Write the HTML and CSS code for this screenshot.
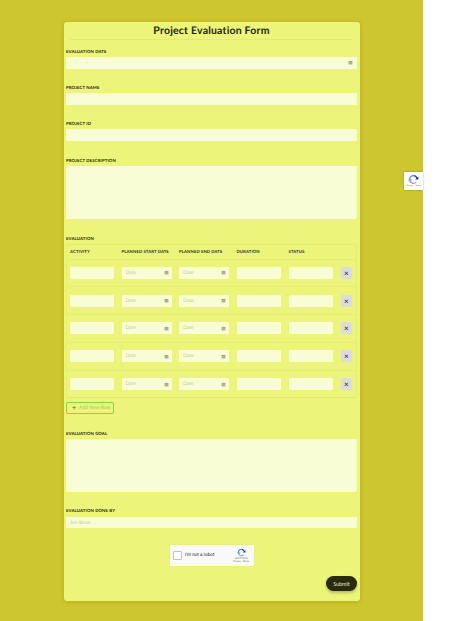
FILE: index.html
```html
<!DOCTYPE html>
<html lang="en">
<head>
<meta charset="utf-8">
<title>Project Evaluation Form</title>
<link rel="stylesheet" href="styles.css">
</head>
<body>
<main class="page">
  <form class="card">
    <h1 class="title">Project Evaluation Form</h1>
    <div class="field f-date">
      <label class="label">EVALUATION DATE</label>
      <div class="input"><span class="ph faint">- - / - - / - - - -</span><svg class="cal" viewBox="0 0 8 8"><path d="M1 1.5h6v5.5H1z" fill="#9b9b80"/><path d="M1.6 3.2h4.8M1.6 4.6h4.8M1.6 5.8h4.8" stroke="#dcdcc0" stroke-width=".5"/></svg></div>
    </div>
    <div class="field f-name">
      <label class="label">PROJECT NAME</label>
      <div class="input"></div>
    </div>
    <div class="field f-id">
      <label class="label">PROJECT ID</label>
      <div class="input"></div>
    </div>
    <div class="field f-desc">
      <label class="label">PROJECT DESCRIPTION</label>
      <div class="textarea"></div>
    </div>
    <div class="field f-eval">
      <label class="label">EVALUATION</label>
      <div class="table">
        <div class="row head">
          <span>ACTIVITY</span><span>PLANNED START DATE</span><span>PLANNED END DATE</span><span>DURATION</span><span>STATUS</span><span></span>
        </div>
        <div class="row">
          <div class="cell"></div>
          <div class="cell date"><span class="ph">Date</span><svg class="cal" viewBox="0 0 8 8"><path d="M1 1.5h6v5.5H1z" fill="#9b9b80"/><path d="M1.6 3.2h4.8M1.6 4.6h4.8M1.6 5.8h4.8" stroke="#dcdcc0" stroke-width=".5"/></svg></div>
          <div class="cell date"><span class="ph">Date</span><svg class="cal" viewBox="0 0 8 8"><path d="M1 1.5h6v5.5H1z" fill="#9b9b80"/><path d="M1.6 3.2h4.8M1.6 4.6h4.8M1.6 5.8h4.8" stroke="#dcdcc0" stroke-width=".5"/></svg></div>
          <div class="cell"></div><div class="cell"></div>
          <div class="del"><span class="del-x">×</span></div>
        </div>
        <div class="row">
          <div class="cell"></div>
          <div class="cell date"><span class="ph">Date</span><svg class="cal" viewBox="0 0 8 8"><path d="M1 1.5h6v5.5H1z" fill="#9b9b80"/><path d="M1.6 3.2h4.8M1.6 4.6h4.8M1.6 5.8h4.8" stroke="#dcdcc0" stroke-width=".5"/></svg></div>
          <div class="cell date"><span class="ph">Date</span><svg class="cal" viewBox="0 0 8 8"><path d="M1 1.5h6v5.5H1z" fill="#9b9b80"/><path d="M1.6 3.2h4.8M1.6 4.6h4.8M1.6 5.8h4.8" stroke="#dcdcc0" stroke-width=".5"/></svg></div>
          <div class="cell"></div><div class="cell"></div>
          <div class="del"><span class="del-x">×</span></div>
        </div>
        <div class="row">
          <div class="cell"></div>
          <div class="cell date"><span class="ph">Date</span><svg class="cal" viewBox="0 0 8 8"><path d="M1 1.5h6v5.5H1z" fill="#9b9b80"/><path d="M1.6 3.2h4.8M1.6 4.6h4.8M1.6 5.8h4.8" stroke="#dcdcc0" stroke-width=".5"/></svg></div>
          <div class="cell date"><span class="ph">Date</span><svg class="cal" viewBox="0 0 8 8"><path d="M1 1.5h6v5.5H1z" fill="#9b9b80"/><path d="M1.6 3.2h4.8M1.6 4.6h4.8M1.6 5.8h4.8" stroke="#dcdcc0" stroke-width=".5"/></svg></div>
          <div class="cell"></div><div class="cell"></div>
          <div class="del"><span class="del-x">×</span></div>
        </div>
        <div class="row">
          <div class="cell"></div>
          <div class="cell date"><span class="ph">Date</span><svg class="cal" viewBox="0 0 8 8"><path d="M1 1.5h6v5.5H1z" fill="#9b9b80"/><path d="M1.6 3.2h4.8M1.6 4.6h4.8M1.6 5.8h4.8" stroke="#dcdcc0" stroke-width=".5"/></svg></div>
          <div class="cell date"><span class="ph">Date</span><svg class="cal" viewBox="0 0 8 8"><path d="M1 1.5h6v5.5H1z" fill="#9b9b80"/><path d="M1.6 3.2h4.8M1.6 4.6h4.8M1.6 5.8h4.8" stroke="#dcdcc0" stroke-width=".5"/></svg></div>
          <div class="cell"></div><div class="cell"></div>
          <div class="del"><span class="del-x">×</span></div>
        </div>
        <div class="row">
          <div class="cell"></div>
          <div class="cell date"><span class="ph">Date</span><svg class="cal" viewBox="0 0 8 8"><path d="M1 1.5h6v5.5H1z" fill="#9b9b80"/><path d="M1.6 3.2h4.8M1.6 4.6h4.8M1.6 5.8h4.8" stroke="#dcdcc0" stroke-width=".5"/></svg></div>
          <div class="cell date"><span class="ph">Date</span><svg class="cal" viewBox="0 0 8 8"><path d="M1 1.5h6v5.5H1z" fill="#9b9b80"/><path d="M1.6 3.2h4.8M1.6 4.6h4.8M1.6 5.8h4.8" stroke="#dcdcc0" stroke-width=".5"/></svg></div>
          <div class="cell"></div><div class="cell"></div>
          <div class="del"><span class="del-x">×</span></div>
        </div>
      </div>
      <div class="add"><span class="plus">+</span> Add New Row</div>
    </div>
    <div class="field f-goal">
      <label class="label">EVALUATION GOAL</label>
      <div class="textarea"></div>
    </div>
    <div class="field f-done">
      <label class="label">EVALUATION DONE BY</label>
      <div class="input"><span class="ph">Jon Brow</span></div>
    </div>
    <div class="captcha">
      <span class="check"></span>
      <span class="robot">I'm not a robot</span>
      <span class="brand">
        <svg class="rc" viewBox="0 0 16 16"><path d="M8 1.5a6.5 6.5 0 0 1 5.6 3.2L15 3.5V8h-4.5l1.7-1.7A4.6 4.6 0 0 0 8 3.4z" fill="#1c3aa9"/><path d="M8 1.5A6.5 6.5 0 0 0 1.5 8H0l3 3.5L6 8H3.4A4.6 4.6 0 0 1 8 3.4z" fill="#4a90e2"/><path d="M1.5 8A6.5 6.5 0 0 0 12.7 12.5l-1.4-1.4A4.6 4.6 0 0 1 3.4 8z" fill="#ababab"/></svg>
        <span class="rc-t">reCAPTCHA</span>
        <span class="rc-t">Privacy - Terms</span>
      </span>
    </div>
    <div class="actions"><button type="button" class="submit">Submit</button></div>
  </form>
  <aside class="badge">
    <svg class="rc-b" viewBox="0 0 16 16"><path d="M8 1.5a6.5 6.5 0 0 1 5.6 3.2L15 3.5V8h-4.5l1.7-1.7A4.6 4.6 0 0 0 8 3.4z" fill="#1c3aa9"/><path d="M8 1.5A6.5 6.5 0 0 0 1.5 8H0l3 3.5L6 8H3.4A4.6 4.6 0 0 1 8 3.4z" fill="#4a90e2"/><path d="M1.5 8A6.5 6.5 0 0 0 12.7 12.5l-1.4-1.4A4.6 4.6 0 0 1 3.4 8z" fill="#ababab"/></svg>
    <span class="badge-t">Privacy - Terms</span>
  </aside>
</main>
</body>
</html>
```
FILE: styles.css
```css
* { box-sizing: border-box; }
html, body { margin: 0; background: #fff; }
body { font-family: "Lato", "Liberation Sans", sans-serif; color: #2a2a10; height: 621px; overflow: hidden; text-rendering: geometricPrecision; }
.page { position: relative; width: 423px; height: 621px; background: #cec62e; padding: 22px 63px 0 64px; }
.card { width: 296px; height: 579px; background: #ecf57a; border-radius: 3px; padding: 0 3px 0 2px; box-shadow: 0 1px 4px rgba(90,90,0,.25); }
.title { margin: 0 4px; height: 18px; padding-top: 3px; font-size: 10.5px; line-height: 13px; font-weight: 700; letter-spacing: .2px; text-align: center; color: #24240a; border-bottom: 1px solid #e2eb6e; }
.field { display: flex; flex-direction: column; }
.label { display: block; font-size: 4.3px; line-height: 6px; font-weight: 700; letter-spacing: .12px; color: #24240a; margin-bottom: 2px; }
.f-date { margin-top: 9px; }
.f-name { margin-top: 16.5px; }
.f-id { margin-top: 16.5px; }
.f-desc { margin-top: 17px; }
.f-eval { margin-top: 17px; }
.f-goal { margin-top: 17px; }
.f-done { margin-top: 16px; }
.f-done .label { margin-bottom: 2.5px; }
.input { height: 11.5px; background: #f9fdd6; display: flex; align-items: center; justify-content: space-between; padding: 0 4px 0 4px; }
.textarea { height: 53px; background: #f9fdd6; border-radius: 1px 1px 3px 1px; }
.ph { font-size: 5px; color: #c8cc98; }
.faint { color: #dde2aa; }
.cal { width: 5px; height: 5px; flex: none; }
.table { border: 1px solid #e6ef70; border-bottom-color: #e2eb6c; }
.row { display: grid; grid-template-columns: 44px 50px 50px 44.5px 44.5px 11.5px; column-gap: 7.5px; align-items: center; height: 27.8px; padding-left: 3px; border-top: 1px solid #e6ef70; }
.row.head { height: 14px; border-top: 0; font-size: 4.3px; font-weight: 700; letter-spacing: .08px; color: #33331a; white-space: nowrap; }
.cell { height: 12px; background: #f9fdd6; border-radius: 1px; display: flex; align-items: center; justify-content: space-between; padding: 0 3px 0 4px; }
.del { width: 11.5px; height: 12px; background: #dcdce0; border-radius: 2px; display: flex; align-items: center; justify-content: center; }
.del-x { font-size: 8px; line-height: 8px; font-weight: 700; color: #44445c; }
.add { align-self: flex-start; display: flex; align-items: center; gap: 3px; height: 12px; width: 48px; margin-top: 4px; padding-left: 5px; border: 1px solid #8fd14f; border-radius: 2px; font-size: 5px; color: #a7c66a; white-space: nowrap; }
.plus { font-size: 7px; line-height: 7px; font-weight: 700; color: #54a030; }
.captcha { display: flex; align-items: center; width: 84px; height: 21px; margin: 16.5px 0 0 104px; background: #f9f9f9; border-radius: 1px; padding: 0 4px 0 3px; box-shadow: 0 0 1px rgba(0,0,0,.2); }
.check { width: 8.5px; height: 8.5px; background: #fff; border: 1px solid #c1c1c1; border-radius: 1px; flex: none; }
.robot { margin-left: 3.5px; font-family: "Roboto", sans-serif; font-size: 4.6px; color: #222; white-space: nowrap; flex: 1; }
.brand { display: flex; flex-direction: column; align-items: center; width: 18px; }
.rc { width: 9px; height: 9px; }
.rc-t { font-size: 2.4px; line-height: 3px; color: #666; white-space: nowrap; }
.actions { display: flex; justify-content: flex-end; margin-top: 10.5px; }
.submit { width: 31px; height: 15px; padding: 0; border: 0; border-radius: 8px; background: #2a2a10; color: #e8e8c8; font-family: "Lato", sans-serif; font-size: 5.4px; box-shadow: 0 2px 3px rgba(60,60,0,.3); }
.badge { position: absolute; top: 172px; left: 404px; width: 19px; height: 18px; background: #fff; display: flex; flex-direction: column; align-items: center; padding-top: 2px; box-shadow: 0 0 2px rgba(0,0,0,.3); }
.rc-b { width: 11px; height: 11px; }
.badge-t { font-size: 2.2px; line-height: 3px; color: #555; white-space: nowrap; }
```
